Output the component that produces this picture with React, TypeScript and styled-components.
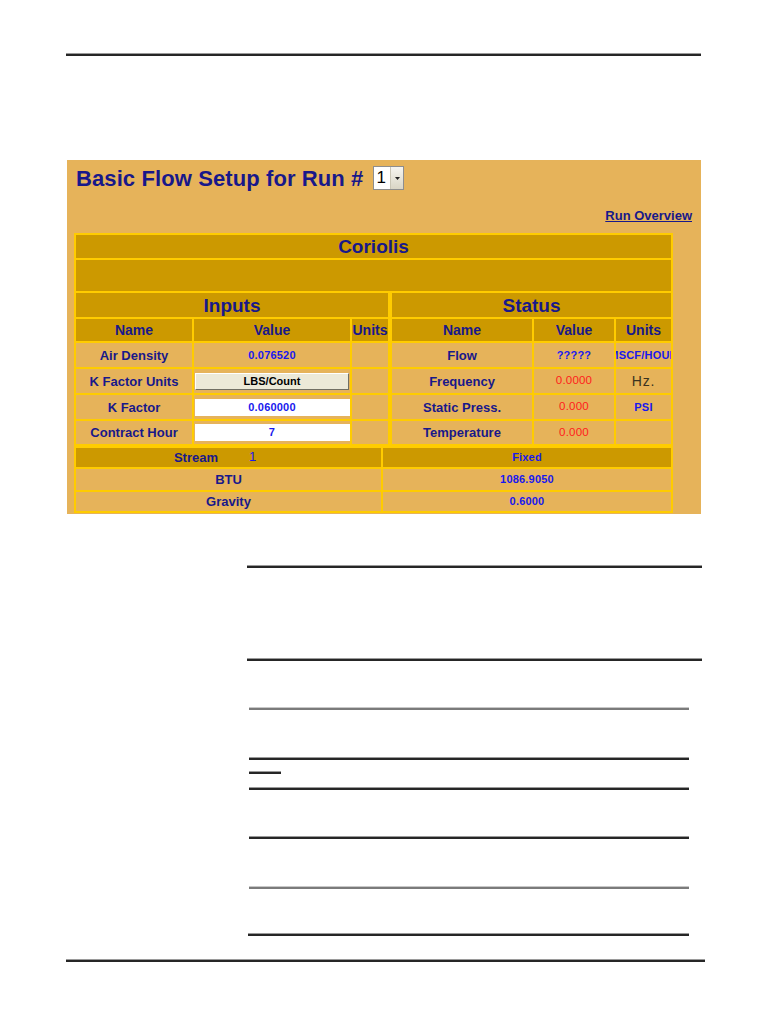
import React from "react";
import styled, { createGlobalStyle } from "styled-components";

const GlobalStyle = createGlobalStyle`
  html, body { margin: 0; padding: 0; background: #ffffff; }
  body { font-family: "Liberation Sans", Arial, sans-serif; }
`;

const NAVY = "#18188a";
const BLUE = "#1818ee";
const RED = "#ff1c1c";
const DARK = "#cc9900";
const LIGHT = "#e6b35a";
const LINE = "#ffcc00";

const Page = styled.div`
  display: flex;
  flex-direction: column;
  align-items: flex-start;
  width: 768px;
  min-height: 1024px;
  padding-top: 54px;
  box-sizing: border-box;
`;

const Rule = styled.div<{ $top: number; $left: number; $width: number; $tone?: "dark" | "gray" }>`
  flex-shrink: 0;
  margin-top: ${(p) => p.$top}px;
  margin-left: ${(p) => p.$left}px;
  width: ${(p) => p.$width}px;
  height: 2px;
  background: ${(p) => (p.$tone === "gray" ? "#7b7b7b" : "#262626")};
  box-shadow: 0 -1px 0 ${(p) => (p.$tone === "gray" ? "#c8c8c8" : "#9a9a9a")};
`;

const Panel = styled.section`
  flex-shrink: 0;
  margin-top: 104px;
  margin-left: 67px;
  width: 634px;
  height: 354px;
  overflow: hidden;
  box-sizing: border-box;
  padding: 6px 9px 0 7px;
  background: ${LIGHT};
  display: flex;
  flex-direction: column;
`;

const TitleRow = styled.div`
  display: flex;
  align-items: flex-start;
  gap: 10px;
  padding-left: 2px;
`;

const Title = styled.h1`
  margin: 0;
  font: bold 22px/25px "Liberation Sans", Arial, sans-serif;
  letter-spacing: 0.1px;
  color: ${NAVY};
  white-space: nowrap;
`;

const RunSelect = styled.div`
  display: flex;
  width: 31px;
  height: 24px;
  box-sizing: border-box;
  border: 1px solid #8e8e8e;
  background: #ffffff;
`;

const SelectValue = styled.span`
  flex: 1;
  padding-left: 2px;
  font: 17px/22px "Liberation Sans", Arial, sans-serif;
  color: #000000;
`;

const SelectButton = styled.span`
  width: 12px;
  display: flex;
  align-items: center;
  justify-content: center;
  background: linear-gradient(#f6f5f0, #d9d5c5);
  border-left: 1px solid #c9c5b5;
`;

const LinkRow = styled.div`
  display: flex;
  justify-content: flex-end;
  margin-top: 17px;
`;

const OverviewLink = styled.a`
  font: bold 13px/15px "Liberation Sans", Arial, sans-serif;
  color: ${NAVY};
  text-decoration: underline;
  cursor: pointer;
`;

const MainGrid = styled.div`
  margin-top: 10px;
  display: grid;
  grid-template-columns: 116px 156px 36px 142px 80px 55px;
  grid-template-rows: 23px 31px 24px 22px 24px 24px 24px 23px;
  gap: 2px;
  padding: 2px;
  width: 599px;
  box-sizing: border-box;
  background: ${LINE};
`;

const SubGrid = styled.div`
  display: grid;
  grid-template-columns: 305px 288px;
  grid-template-rows: 19px 21px 19px;
  gap: 2px;
  padding: 2px;
  width: 599px;
  box-sizing: border-box;
  background: ${LINE};
`;

const Cell = styled.div<{ $tone: "dark" | "light"; $span?: number; $split?: boolean }>`
  grid-column: span ${(p) => p.$span ?? 1};
  min-width: 0;
  overflow: hidden;
  white-space: nowrap;
  display: flex;
  align-items: center;
  justify-content: center;
  background: ${(p) => (p.$tone === "dark" ? DARK : LIGHT)};
  border-left: ${(p) => (p.$split ? `2px solid ${LINE}` : "0")};
`;

const Heading = styled.span<{ $size: number }>`
  font: bold ${(p) => p.$size}px/1 "Liberation Sans", Arial, sans-serif;
  color: ${NAVY};
  flex-shrink: 0;
`;

const Reading = styled.span<{ $color: "blue" | "red"; $bold?: boolean }>`
  font: ${(p) => (p.$bold ? "bold 11px" : "11.5px")}/1 "Liberation Sans", Arial, sans-serif;
  letter-spacing: 0.2px;
  color: ${(p) => (p.$color === "blue" ? BLUE : RED)};
  flex-shrink: 0;
`;

const UnitPlain = styled.span`
  font: 14px/1 "Liberation Sans", Arial, sans-serif;
  letter-spacing: 0.8px;
  color: #3a3320;
`;

const ActionButton = styled.div`
  width: 154px;
  height: 17px;
  box-sizing: border-box;
  display: flex;
  align-items: center;
  justify-content: center;
  background: #ece9d8;
  border: 1px solid;
  border-color: #ffffff #716f64 #716f64 #ffffff;
  font: bold 11px/1 "Liberation Sans", Arial, sans-serif;
  color: #000000;
`;

const TextBox = styled.div`
  width: 155px;
  height: 17px;
  display: flex;
  align-items: center;
  justify-content: center;
  background: #ffffff;
  font: bold 11px/1 "Liberation Sans", Arial, sans-serif;
  letter-spacing: 0.2px;
  color: ${BLUE};
`;

const StreamValue = styled.span`
  width: 34px;
  margin-left: 31px;
  margin-top: -3px;
  font: 13px/1 "Liberation Sans", Arial, sans-serif;
  color: ${BLUE};
`;

type InputRow = { name: string; value: React.ReactNode };
type StatusRow = { name: string; value: React.ReactNode; unit: React.ReactNode };

const inputRows: InputRow[] = [
  { name: "Air Density", value: <Reading $color="blue" $bold>0.076520</Reading> },
  { name: "K Factor Units", value: <ActionButton>LBS/Count</ActionButton> },
  { name: "K Factor", value: <TextBox>0.060000</TextBox> },
  { name: "Contract Hour", value: <TextBox>7</TextBox> },
];

const statusRows: StatusRow[] = [
  {
    name: "Flow",
    value: <Reading $color="blue" $bold>?????</Reading>,
    unit: <Reading $color="blue" $bold>MSCF/HOUR</Reading>,
  },
  { name: "Frequency", value: <Reading $color="red">0.0000</Reading>, unit: <UnitPlain>Hz.</UnitPlain> },
  {
    name: "Static Press.",
    value: <Reading $color="red">0.000</Reading>,
    unit: <Reading $color="blue" $bold>PSI</Reading>,
  },
  { name: "Temperature", value: <Reading $color="red">0.000</Reading>, unit: null },
];

export default function App() {
  return (
    <>
      <GlobalStyle />
      <Page>
        <Rule $top={0} $left={66} $width={635} />

        <Panel>
          <TitleRow>
            <Title>Basic Flow Setup for Run #</Title>
            <RunSelect>
              <SelectValue>1</SelectValue>
              <SelectButton>
                <svg width="5" height="3" viewBox="0 0 5 3">
                  <path d="M0 0H5L2.5 3Z" fill="#222" />
                </svg>
              </SelectButton>
            </RunSelect>
          </TitleRow>

          <LinkRow>
            <OverviewLink>Run Overview</OverviewLink>
          </LinkRow>

          <MainGrid>
            <Cell $tone="dark" $span={6}>
              <Heading $size={19}>Coriolis</Heading>
            </Cell>
            <Cell $tone="dark" $span={6} />
            <Cell $tone="dark" $span={3}>
              <Heading $size={19}>Inputs</Heading>
            </Cell>
            <Cell $tone="dark" $span={3} $split>
              <Heading $size={19}>Status</Heading>
            </Cell>

            <Cell $tone="dark"><Heading $size={14}>Name</Heading></Cell>
            <Cell $tone="dark"><Heading $size={14}>Value</Heading></Cell>
            <Cell $tone="dark"><Heading $size={14}>Units</Heading></Cell>
            <Cell $tone="dark" $split><Heading $size={14}>Name</Heading></Cell>
            <Cell $tone="dark"><Heading $size={14}>Value</Heading></Cell>
            <Cell $tone="dark"><Heading $size={14}>Units</Heading></Cell>

            {inputRows.map((row, i) => (
              <React.Fragment key={row.name}>
                <Cell $tone="light"><Heading $size={13}>{row.name}</Heading></Cell>
                <Cell $tone="light">{row.value}</Cell>
                <Cell $tone="light" />
                <Cell $tone="light" $split><Heading $size={13}>{statusRows[i].name}</Heading></Cell>
                <Cell $tone="light">{statusRows[i].value}</Cell>
                <Cell $tone="light">{statusRows[i].unit}</Cell>
              </React.Fragment>
            ))}
          </MainGrid>

          <SubGrid>
            <Cell $tone="dark">
              <Heading $size={13}>Stream</Heading>
              <StreamValue>1</StreamValue>
            </Cell>
            <Cell $tone="dark">
              <Reading $color="blue" $bold>Fixed</Reading>
            </Cell>
            <Cell $tone="light"><Heading $size={13}>BTU</Heading></Cell>
            <Cell $tone="light"><Reading $color="blue" $bold>1086.9050</Reading></Cell>
            <Cell $tone="light"><Heading $size={13}>Gravity</Heading></Cell>
            <Cell $tone="light"><Reading $color="blue" $bold>0.6000</Reading></Cell>
          </SubGrid>
        </Panel>

        <Rule $top={52} $left={247} $width={455} />
        <Rule $top={91} $left={247} $width={455} />
        <Rule $top={47} $left={249} $width={440} $tone="gray" />
        <Rule $top={48} $left={249} $width={440} />
        <Rule $top={12} $left={249} $width={32} />
        <Rule $top={14} $left={249} $width={440} />
        <Rule $top={47} $left={249} $width={440} />
        <Rule $top={48} $left={249} $width={440} $tone="gray" />
        <Rule $top={45} $left={248} $width={441} />
        <Rule $top={24} $left={66} $width={639} />
      </Page>
    </>
  );
}
